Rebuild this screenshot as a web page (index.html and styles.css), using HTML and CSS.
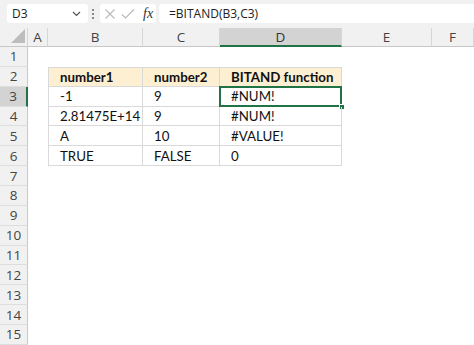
FILE: index.html
```html
<!DOCTYPE html>
<html>
<head>
<meta charset="utf-8">
<link rel="stylesheet" href="styles.css">
</head>
<body>
<div class="app">
  <div class="toolbar">
    <div class="namebox">
      <span class="name">D3</span>
      <svg class="chev" width="9" height="6" viewBox="0 0 9 6"><path d="M1 1l3.5 3.5L8 1" fill="none" stroke="#555" stroke-width="1.2"/></svg>
    </div>
    <div class="dots"><i></i><i></i><i></i></div>
    <div class="fxbox">
      <svg width="12" height="12" viewBox="0 0 12 12"><path d="M1.5 1.5l9 9M10.5 1.5l-9 9" stroke="#b9b9b9" stroke-width="1.1"/></svg>
      <svg width="14" height="12" viewBox="0 0 14 12"><path d="M1 6.5l3.5 3.5L13 1.5" fill="none" stroke="#b9b9b9" stroke-width="1.1"/></svg>
      <span class="fx">fx</span>
    </div>
    <div class="formula">=BITAND(B3,C3)</div>
  </div>
  <div class="sheet">
    <div class="corner"><svg width="14" height="14" viewBox="0 0 14 14"><path d="M14 0V14H0Z" fill="#bdbdbd"/></svg></div>
    <div class="ch">A</div><div class="ch">B</div><div class="ch">C</div><div class="ch sel">D</div><div class="ch">E</div><div class="ch">F</div>

    <div class="rh">1</div><div></div><div></div><div></div><div></div><div></div><div></div>

    <div class="rh">2</div><div></div>
    <div class="c th first">number1</div><div class="c th">number2</div><div class="c th">BITAND function</div>
    <div></div><div></div>

    <div class="rh selr">3</div><div></div>
    <div class="c first">-1</div><div class="c">9</div><div class="c active">#NUM!<span class="ring"></span><span class="handle"></span></div>
    <div></div><div></div>

    <div class="rh">4</div><div></div>
    <div class="c first">2.81475E+14</div><div class="c">9</div><div class="c">#NUM!</div>
    <div></div><div></div>

    <div class="rh">5</div><div></div>
    <div class="c first">A</div><div class="c">10</div><div class="c">#VALUE!</div>
    <div></div><div></div>

    <div class="rh">6</div><div></div>
    <div class="c first">TRUE</div><div class="c">FALSE</div><div class="c">0</div>
    <div></div><div></div>

    <div class="rh">7</div><div></div><div></div><div></div><div></div><div></div><div></div>
    <div class="rh">8</div><div></div><div></div><div></div><div></div><div></div><div></div>
    <div class="rh">9</div><div></div><div></div><div></div><div></div><div></div><div></div>
    <div class="rh">10</div><div></div><div></div><div></div><div></div><div></div><div></div>
    <div class="rh">11</div><div></div><div></div><div></div><div></div><div></div><div></div>
    <div class="rh">12</div><div></div><div></div><div></div><div></div><div></div><div></div>
    <div class="rh">13</div><div></div><div></div><div></div><div></div><div></div><div></div>
    <div class="rh">14</div><div></div><div></div><div></div><div></div><div></div><div></div>
    <div class="rh">15</div><div></div><div></div><div></div><div></div><div></div><div></div>
  </div>
</div>
</body>
</html>
```

FILE: styles.css
```css
* { box-sizing: border-box; }
html, body { margin: 0; padding: 0; background: #fff; }
body { width: 474px; height: 345px; overflow: hidden; }
.app { width: 474px; }

.toolbar {
  height: 28px;
  background: #f1f1f1;
  display: flex;
  align-items: flex-start;
  padding: 4px 0 0 7px;
  font-family: "Open Sans", "Noto Sans", sans-serif;
  font-size: 12px;
  color: #222;
}
.namebox {
  width: 81px; height: 19px;
  background: #fff;
  border-radius: 3px;
  display: flex; align-items: center;
  padding: 0 7px 0 5px;
  justify-content: space-between;
}
.dots { width: 10px; height: 19px; display: flex; flex-direction: column; align-items: center; justify-content: center; gap: 2px; }
.dots i { width: 2px; height: 2px; background: #666; border-radius: 1px; display: block; }
.fxbox {
  width: 56px; height: 19px; background: #fff; border-radius: 3px; margin-left: 2px;
  display: flex; align-items: center; gap: 5px; padding-left: 4px;
}
.fx { font-family: "Liberation Serif", serif; font-style: italic; font-size: 14px; color: #333; margin-left: 3px; }
.formula {
  flex: 1; height: 19px; margin-left: 3px; background: #fff; border-radius: 3px 0 0 3px;
  display: flex; align-items: center; padding-left: 10px;
}

.sheet {
  display: grid;
  grid-template-columns: 28px 20px 95px 77px 122px 90px 42px;
  grid-template-rows: 19px repeat(15, 19.86px);
  font-family: Lato, "Liberation Sans", sans-serif;
  font-size: 13.3px;
  color: #111;
}
.corner {
  background: #f1f1f1; border-right: 1px solid #d6d6d6; border-bottom: 1px solid #c8c8c8;
  display: flex; align-items: flex-end; justify-content: flex-end; padding: 0 2px 3px 0;
}
.ch {
  background: #f1f1f1;
  border-right: 1px solid #d6d6d6;
  border-bottom: 1px solid #c8c8c8;
  font-family: "Open Sans", "Noto Sans", sans-serif;
  font-size: 13.5px; color: #444;
  display: flex; align-items: center; justify-content: center;
}
.ch.sel { background: #d3d3d3; border-bottom: 2px solid #217346; color: #333; }
.rh {
  background: #f1f1f1;
  border-right: 1px solid #c8c8c8;
  border-bottom: 1px solid #dedede;
  font-family: "Open Sans", "Noto Sans", sans-serif;
  font-size: 13.5px; color: #444;
  display: flex; align-items: center; justify-content: center;
}
.rh.selr { background: #d3d3d3; border-right: 2px solid #217346; }

.c {
  position: relative;
  border-right: 1px solid #d9d9d9;
  border-bottom: 1px solid #d9d9d9;
  padding-left: 11px;
  display: flex; align-items: center;
  white-space: nowrap;
}
.c.first { border-left: 1px solid #d9d9d9; }
.c.th { background: #fdefd2; font-weight: bold; border-top: 1px solid #d9d9d9; }
.ring {
  position: absolute; left: -1px; top: -1px; right: -1px; bottom: -1px;
  border: 2px solid #217346;
}
.handle {
  position: absolute; right: -4px; bottom: -4px; width: 6px; height: 6px;
  background: #217346; border: 1px solid #fff;
}
```
